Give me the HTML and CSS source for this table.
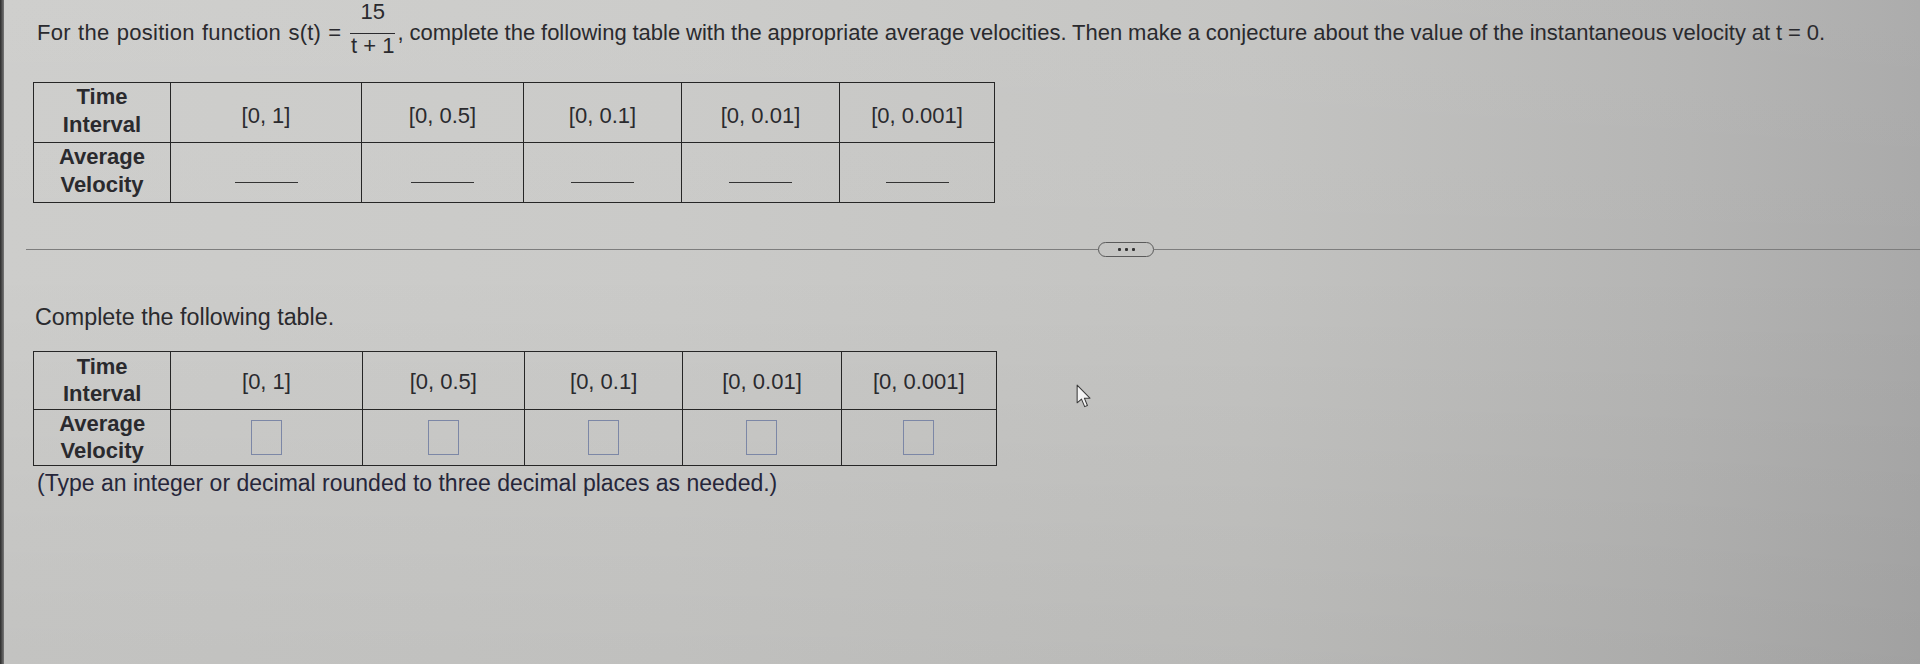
FILE: index.html
```html
<!DOCTYPE html>
<html lang="en">
<head>
<meta charset="utf-8">
<title>Average velocity</title>
<link rel="stylesheet" href="styles.css">
</head>
<body>
<div class="bezel"></div>
<main class="page">
  <section class="question">
    <p class="prompt"><span class="lead">For the position function s(t)</span><span class="eq">=</span><span class="frac"><span class="num">15</span><span class="den">t + 1</span></span><span class="rest">, complete the following table with the appropriate average velocities. Then make a conjecture about the value of the instantaneous velocity at t = 0.</span></p>
    <table class="grid given">
      <colgroup>
        <col class="c0"><col class="c1"><col class="c2"><col class="c3"><col class="c4"><col class="c5">
      </colgroup>
      <tr class="r1">
        <th>Time<br>Interval</th>
        <td>[0, 1]</td><td>[0, 0.5]</td><td>[0, 0.1]</td><td>[0, 0.01]</td><td>[0, 0.001]</td>
      </tr>
      <tr class="r2">
        <th>Average<br>Velocity</th>
        <td><span class="blank"></span></td><td><span class="blank"></span></td><td><span class="blank"></span></td><td><span class="blank"></span></td><td><span class="blank"></span></td>
      </tr>
    </table>
  </section>

  <div class="divider">
    <span class="rule rule-left"></span>
    <span class="more"><i></i><i></i><i></i></span>
    <span class="rule rule-right"></span>
  </div>

  <section class="answer">
    <p class="instr">Complete the following table.</p>
    <table class="grid inputs">
      <colgroup>
        <col class="c0"><col class="c1"><col class="c2"><col class="c3"><col class="c4"><col class="c5">
      </colgroup>
      <tr class="r1">
        <th>Time<br>Interval</th>
        <td>[0, 1]</td><td>[0, 0.5]</td><td>[0, 0.1]</td><td>[0, 0.01]</td><td>[0, 0.001]</td>
      </tr>
      <tr class="r2">
        <th>Average<br>Velocity</th>
        <td><span class="box"></span></td><td><span class="box"></span></td><td><span class="box"></span></td><td><span class="box"></span></td><td><span class="box"></span></td>
      </tr>
    </table>
    <p class="note">(Type an integer or decimal rounded to three decimal places as needed.)</p>
  </section>

  <svg class="cursor" width="16" height="24" viewBox="0 0 14 21" aria-hidden="true">
    <path d="M1 1 L1 16.5 L4.8 13.2 L7.6 19.8 L10 18.8 L7.3 12.4 L12.2 12.4 Z" fill="#f4f4f4" stroke="#3a3a3a" stroke-width="0.9" stroke-linejoin="round"/>
  </svg>
</main>
</body>
</html>
```

FILE: styles.css
```css
html, body {
  margin: 0;
  padding: 0;
  height: 100%;
}

body {
  position: relative;
  overflow: hidden;
  font-family: "Liberation Sans", Arial, sans-serif;
  color: #2a2a2e;
  background:
    linear-gradient(to bottom, rgba(255,255,255,0.04) 0%, rgba(0,0,0,0) 40%, rgba(0,0,0,0.05) 100%),
    linear-gradient(to right, #cdcdcb 0%, #cacac8 35%, #c3c3c1 65%, #b4b4b3 88%, #a9a9a9 100%);
}

.bezel {
  position: absolute;
  left: 0;
  top: 0;
  bottom: 0;
  width: 4px;
  background: linear-gradient(to right, #2b2b2b, #777);
}

.page {
  position: relative;
}

.question {
  padding-left: 33px;
}

.prompt {
  margin: 0;
  padding-left: 4px;
  padding-top: 1px;
  height: 69px;
  font-size: 22px;
  line-height: 64px;
  white-space: nowrap;
}

.lead {
  letter-spacing: 0.25px;
  word-spacing: 1px;
}

.rest {
  word-spacing: -0.25px;
}

.eq {
  margin-left: 7px;
  margin-right: 9px;
}

.frac {
  display: inline-flex;
  flex-direction: column;
  align-items: stretch;
  text-align: center;
  vertical-align: 21px;
  margin: 0 2px 0 0;
  font-size: 22px;
  line-height: 22px;
}

.frac .num {
  padding: 0 0 10px;
  border-bottom: 1px solid #2a2a2e;
}

.frac .den {
  padding: 1px 1px 0;
}

.grid {
  border-collapse: collapse;
  table-layout: fixed;
  width: 961px;
  font-size: 22px;
}

.grid .c0 { width: 137px; }
.grid .c1 { width: 191px; }
.grid .c2 { width: 162px; }
.grid .c3 { width: 158px; }
.grid .c4 { width: 158px; }
.grid .c5 { width: 155px; }

.grid th,
.grid td {
  border: 1px solid #262626;
  text-align: center;
  padding: 0;
}

.grid th {
  font-weight: bold;
}

.given {
  margin-top: 12px;
}

.given th {
  line-height: 28px;
  padding: 0 0 3px;
}

.given .r1 td {
  padding-top: 6px;
}

.given .r1 { height: 60px; }
.given .r2 { height: 58px; }

.blank {
  display: inline-block;
  width: 63px;
  height: 0;
  border-bottom: 1px solid #333;
  vertical-align: -3px;
}

.divider {
  display: flex;
  align-items: center;
  margin-top: 38px;
  padding-left: 26px;
  height: 16px;
}

.rule {
  height: 0;
  border-top: 1px solid #7d7d7d;
}

.rule-left {
  flex: 0 0 1072px;
}

.rule-right {
  flex: 1 1 auto;
}

.more {
  display: inline-flex;
  align-items: center;
  justify-content: center;
  gap: 4px;
  box-sizing: border-box;
  width: 56px;
  height: 15px;
  border: 1.5px solid #5a5a5a;
  border-radius: 8px;
}

.more i {
  display: block;
  width: 3px;
  height: 3px;
  background: #333;
  border-radius: 1px;
}

.answer {
  padding-left: 33px;
}

.instr {
  margin: 0;
  padding-top: 47px;
  padding-left: 2px;
  font-size: 23.3px;
  line-height: 26px;
}

.inputs {
  margin-top: 21px;
  width: 964px;
}

.inputs th {
  line-height: 27px;
  padding: 0 0 1px;
}

.inputs .r1 td {
  padding-top: 3px;
}

.inputs .r1 { height: 58px; }
.inputs .r2 { height: 56px; }

.box {
  display: inline-block;
  box-sizing: border-box;
  width: 31px;
  height: 35px;
  border: 1px solid #7c87a6;
  vertical-align: middle;
}

.note {
  margin: 0;
  padding-top: 4px;
  padding-left: 4px;
  font-size: 23px;
  line-height: 26px;
  color: #26263a;
}

.cursor {
  position: absolute;
  left: 1076px;
  top: 384px;
}
```
